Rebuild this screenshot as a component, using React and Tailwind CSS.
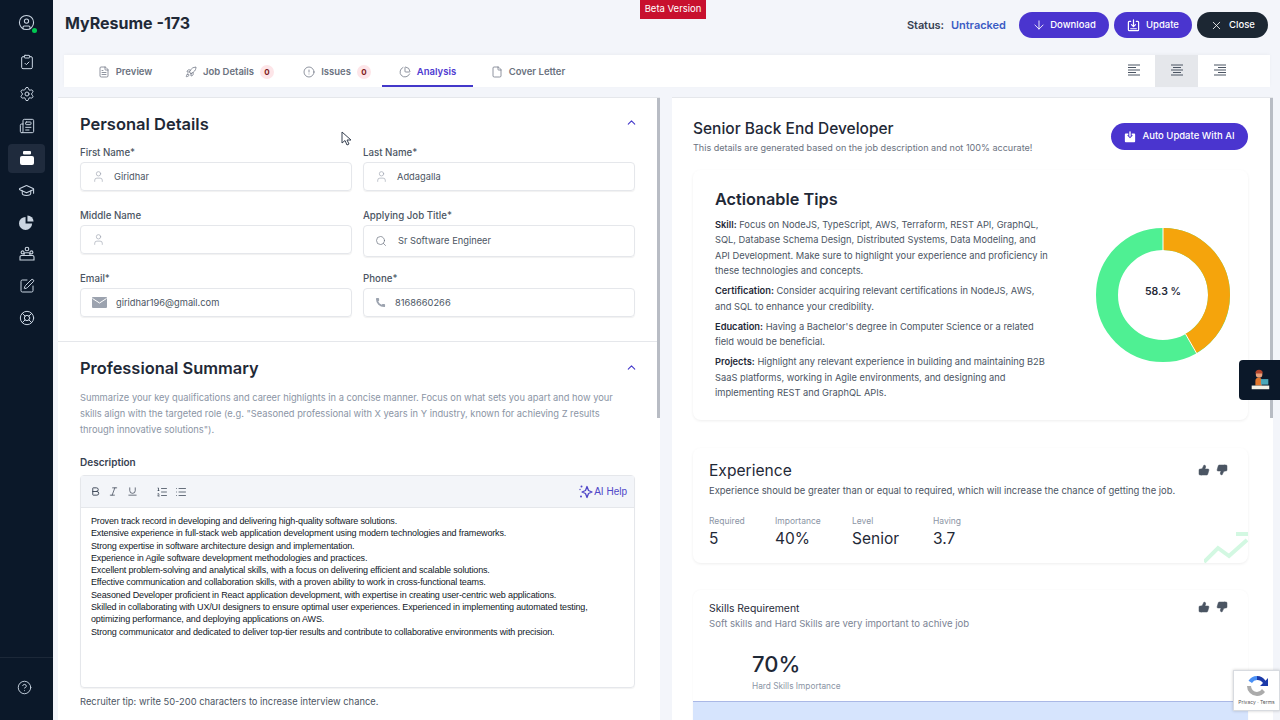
import React from 'react';
import {
  CircleUser, ClipboardCheck, Settings, Newspaper, GraduationCap, SquarePen, LifeBuoy, CircleHelp,
  FileText, Rocket, CircleAlert, ChartPie, File, ArrowDown, X,
  Bold, Italic, Underline, ListOrdered, List, ThumbsUp, ThumbsDown, User, Search,
  Phone, ChevronUp,
} from 'lucide-react';

function StackIcon() {
  return (
    <svg width="16" height="14" viewBox="0 0 16 14" fill="white">
      <rect x="4" y="0" width="8" height="3.5" rx="1" />
      <path d="M3 5h10a2 2 0 0 1 2 2v5a2 2 0 0 1-2 2H3a2 2 0 0 1-2-2V7a2 2 0 0 1 2-2z" />
    </svg>
  );
}

function PieFilled() {
  return (
    <svg width="15" height="15" viewBox="0 0 16 16" fill="#cbd5e1">
      <path d="M7 2a7 7 0 1 0 7 7H7z" />
      <path d="M9 0.5a6.5 6.5 0 0 1 6.5 6.5H9z" />
    </svg>
  );
}

function TeamIcon() {
  return (
    <svg width="16" height="16" viewBox="0 0 16 16" fill="none" stroke="#cbd5e1" strokeWidth="1.1">
      <circle cx="8" cy="3" r="1.8" />
      <circle cx="3.6" cy="6.4" r="1.5" />
      <circle cx="12.4" cy="6.4" r="1.5" />
      <path d="M5 10V8.4a1.6 1.6 0 0 1 1.6-1.6h2.8A1.6 1.6 0 0 1 11 8.4V10" />
      <path d="M1 14v-3a1.5 1.5 0 0 1 1.5-1.5h11A1.5 1.5 0 0 1 15 11v3z" />
    </svg>
  );
}

function Sidebar() {
  const iconCls = 'text-slate-300';
  const items = [
    <ClipboardCheck size={16} strokeWidth={1.5} className={iconCls} />,
    <Settings size={16} strokeWidth={1.5} className={iconCls} />,
    <Newspaper size={16} strokeWidth={1.5} className={iconCls} />,
    <StackIcon />,
    <GraduationCap size={17} strokeWidth={1.5} className={iconCls} />,
    <PieFilled />,
    <TeamIcon />,
    <SquarePen size={16} strokeWidth={1.5} className={iconCls} />,
    <LifeBuoy size={16} strokeWidth={1.5} className={iconCls} />,
  ];
  return (
    <div className="w-[53px] shrink-0 bg-[#0b1829] flex flex-col items-center">
      <div className="relative mt-[14px] mb-[14px] h-[18px]">
        <CircleUser size={17} strokeWidth={1.5} className="text-slate-300" />
        <span className="absolute right-[-2px] bottom-[-1px] w-[5px] h-[5px] rounded-full bg-green-500" />
      </div>
      <div className="flex flex-col items-center w-full">
        {items.map((icon, i) => (
          <div key={i} className="h-[32px] flex items-center">
            <div className={`w-[37px] h-[29px] rounded flex items-center justify-center ${i === 3 ? 'bg-[#1f2b3d]' : ''}`}>{icon}</div>
          </div>
        ))}
      </div>
      <div className="mt-auto w-full border-t border-[#1c2838] h-[63px] flex justify-center pt-[22px] pr-[5px]">
        <CircleHelp size={15} strokeWidth={1.5} className="text-slate-300" />
      </div>
    </div>
  );
}

const tabs = [
  { label: 'Preview', Icon: FileText, w: 'w-[84px]' },
  { label: 'Job Details', Icon: Rocket, badge: true, w: 'w-[125px]' },
  { label: 'Issues', Icon: CircleAlert, badge: true, w: 'w-[90px]' },
  { label: 'Analysis', Icon: ChartPie, active: true, w: 'w-[91px]' },
  { label: 'Cover Letter', Icon: File, w: 'w-[110px]' },
];

function AlignIcon({ side }) {
  const short = side === 'left' ? 'M1 4.500h8M1 9.500h8' : side === 'center' ? 'M3 4.500h8M3 9.500h8' : 'M5 4.500h8M5 9.500h8';
  return (
    <svg width="14" height="14" viewBox="0 0 14 14" fill="none" stroke="#4b5563" strokeWidth="1" className="mb-[2px]">
      <path d="M1 2h12M1 7h12M1 12h12" />
      <path d={short} />
    </svg>
  );
}

function TabBar() {
  return (
    <div className="ml-[11px] mr-[10px] h-[32px] bg-white flex items-center justify-between shadow-[0_-1px_3px_rgba(0,0,0,0.03)]">
      <div className="flex h-full pl-[19px]">
        {tabs.map(({ label, Icon, badge, active, w }) => (
          <div key={label} className={`${w} h-full pt-[2px] flex items-center justify-center gap-[6px] text-[9.5px] font-semibold border-y-2 border-t-transparent ${active ? 'text-[#4f3bd1] border-b-[#4338ca]' : 'text-[#6b7280] border-b-transparent'}`}>
            <Icon size={12} strokeWidth={1.5} className="text-[#6b7280]" />
            <span>{label}</span>
            {badge && <span className="w-[14px] h-[14px] rounded-full bg-[#fde5e8] text-[#7f1d1d] text-[8px] font-bold flex items-center justify-center">0</span>}
          </div>
        ))}
      </div>
      <div className="flex h-full mr-[29px]">
        <div className="w-[43px] flex items-center justify-center"><AlignIcon side="left" /></div>
        <div className="w-[43px] flex items-center justify-center bg-[#e5e7eb]"><AlignIcon side="center" /></div>
        <div className="w-[43px] flex items-center justify-center"><AlignIcon side="right" /></div>
      </div>
    </div>
  );
}

function UpdateIcon() {
  return (
    <svg width="13" height="13" viewBox="0 0 14 14" fill="none" stroke="white" strokeWidth="1.3" strokeLinecap="round" strokeLinejoin="round">
      <path d="M4 2.5H2.5a1 1 0 0 0-1 1v8a1 1 0 0 0 1 1h9a1 1 0 0 0 1-1v-8a1 1 0 0 0-1-1H10" />
      <path d="M7 1v7M4.8 6 7 8.2 9.2 6M4 10.5h6" />
    </svg>
  );
}

function Header() {
  return (
    <div className="h-[55px] shrink-0 flex items-start justify-between pl-[12px] pr-[12px]">
      <h1 className="text-[16px] leading-[46px] font-bold text-[#1f2937]">MyResume -173</h1>
      <div className="flex items-center gap-[5px] mt-[12px] text-[9.5px] font-medium text-white">
        <span className="text-[#374151] text-[11px] tracking-[-0.1px] font-semibold mr-[1px]">Status:</span>
        <span className="text-[#3b5cc4] text-[11px] font-semibold ml-[1px] mr-[8px]">Untracked</span>
        <button className="h-[26px] w-[90px] rounded-full bg-[#4a35cf] flex items-center justify-center gap-[4px]"><ArrowDown size={14} strokeWidth={1.5} />Download</button>
        <button className="h-[26px] w-[78px] rounded-full bg-[#4a35cf] flex items-center justify-center gap-[6px]"><UpdateIcon />Update</button>
        <button className="h-[26px] w-[71px] rounded-full bg-[#1c2733] flex items-center justify-center gap-[6px]"><X size={13} strokeWidth={1.5} />Close</button>
      </div>
    </div>
  );
}

function MailIcon() {
  return (
    <svg width="15" height="11" viewBox="0 0 15 11" className="shrink-0">
      <rect width="15" height="11" rx="1" fill="#9ca3af" />
      <path d="M0.5 1.5 7.5 6l7-4.5" fill="none" stroke="white" strokeWidth="1" />
    </svg>
  );
}

function Field({ label, value, icon, gap = 'ml-[9px]', box = 'h-[29px]' }) {
  return (
    <div>
      <div className="text-[9.7px] leading-[13px] font-medium text-[#4b5563] mb-[3px]">{label}</div>
      <div className={`${box} rounded border border-[#e5e7eb] shadow-[0_1px_1px_rgba(0,0,0,0.06)] flex items-center pl-[11px] text-[9.3px] text-[#4b5563]`}>
        {icon}
        <span className={gap}>{value}</span>
      </div>
    </div>
  );
}

const userIcon = <User size={13} strokeWidth={1.2} className="text-[#9ca3af] shrink-0" />;

const descLines = [
  'Proven track record in developing and delivering high-quality software solutions.',
  'Extensive experience in full-stack web application development using modern technologies and frameworks.',
  'Strong expertise in software architecture design and implementation.',
  'Experience in Agile software development methodologies and practices.',
  'Excellent problem-solving and analytical skills, with a focus on delivering efficient and scalable solutions.',
  'Effective communication and collaboration skills, with a proven ability to work in cross-functional teams.',
  'Seasoned Developer proficient in React application development, with expertise in creating user-centric web applications.',
  'Skilled in collaborating with UX/UI designers to ensure optimal user experiences. Experienced in implementing automated testing,',
  'optimizing performance, and deploying applications on AWS.',
  'Strong communicator and dedicated to deliver top-tier results and contribute to collaborative environments with precision.',
];

function AiStar() {
  return (
    <svg width="14" height="15" viewBox="0 0 14 15" fill="none" stroke="#4f46c8" strokeWidth="1.3" strokeLinejoin="round">
      <path d="M8 2.5 9.5 6.5 13 8l-3.5 1.5L8 13.5 6.5 9.5 3 8l3.500-1.500z" />
      <circle cx="2.500" cy="2.500" r="1" fill="#4f46c8" stroke="none" />
      <circle cx="2" cy="12.500" r="1" fill="#4f46c8" stroke="none" />
      <circle cx="1" cy="5.500" r="0.700" fill="#4f46c8" stroke="none" />
    </svg>
  );
}

function LeftPanel() {
  return (
    <div className="relative w-[602px] shrink-0 bg-white border-t border-[#e5e7eb] overflow-hidden">
      <div className="h-[244px] px-[22px] pt-[14px] border-b border-[#e5e7eb]">
        <div className="flex items-center justify-between">
          <h2 className="text-[16.5px] leading-[24px] font-semibold text-[#1f2937]">Personal Details</h2>
          <ChevronUp size={13} strokeWidth={2} className="text-[#4338ca] mb-[4px]" />
        </div>
        <div className="grid grid-cols-2 gap-x-[11px] gap-y-[18px] w-[555px] mt-[10px]">
          <Field label="First Name*" value="Giridhar" icon={userIcon} />
          <Field label="Last Name*" value="Addagalla" icon={userIcon} />
          <Field label="Middle Name" value="" icon={userIcon} />
          <Field label="Applying Job Title*" value="Sr Software Engineer" gap="ml-[11px]" box="h-[32px] -mb-[3px]" icon={<Search size={12} strokeWidth={1.4} className="text-[#6b7280] shrink-0" />} />
          <Field label="Email*" value="giridhar196@gmail.com" icon={<MailIcon />} />
          <Field label="Phone*" value="8168660266" icon={<Phone size={11} strokeWidth={0} fill="#9ca3af" className="shrink-0" />} />
        </div>
      </div>
      <div className="px-[22px] pt-[14px]">
        <div className="flex items-center justify-between">
          <h2 className="text-[16.4px] leading-[24px] font-semibold text-[#1f2937]">Professional Summary</h2>
          <ChevronUp size={13} strokeWidth={2} className="text-[#4338ca] mb-[2px]" />
        </div>
        <p className="mt-[10px] w-[548px] text-[9.3px] leading-[16px] text-[#8b95a5]">
          Summarize your key qualifications and career highlights in a concise manner. Focus on what sets you apart and how your skills align with the targeted role (e.g. "Seasoned professional with X years in Y industry, known for achieving Z results through innovative solutions").
        </p>
        <div className="mt-[17px] text-[10px] leading-[14px] font-semibold text-[#374151]">Description</div>
        <div className="mt-[6px] w-[555px] h-[213px] rounded border border-[#e5e7eb] shadow-[0_1px_1px_rgba(0,0,0,0.05)]">
          <div className="h-[32px] bg-[#f3f5f9] border-b border-[#e5e7eb] flex items-center pl-[9px] pr-[7px] text-[#374151]">
            <Bold size={11} strokeWidth={2} />
            <Italic size={11} strokeWidth={1.6} className="ml-[7px]" />
            <Underline size={11} strokeWidth={1.6} className="ml-[8px]" />
            <ListOrdered size={12} strokeWidth={1.5} className="ml-[18px]" />
            <List size={12} strokeWidth={1.5} className="ml-[7px]" />
            <div className="ml-auto flex items-center gap-[1px] text-[#4f46c8] text-[10px] font-['Liberation_Sans']">
              <AiStar />AI Help
            </div>
          </div>
          <div className="px-[10px] pt-[7px] text-[#111827] text-[9px] tracking-[-0.15px] leading-[12.3px] font-['Liberation_Sans']">
            {descLines.map((l) => <div key={l} className="whitespace-nowrap">{l}</div>)}
          </div>
        </div>
        <div className="mt-[7px] text-[9.35px] leading-[13px] text-[#4b5563]">Recruiter tip: write 50-200 characters to increase interview chance.</div>
      </div>
      <div className="absolute right-0 top-0 w-[3px] h-[320px] bg-[#b8bcc4]" />
    </div>
  );
}

function Donut() {
  // 41.7% orange from the top going clockwise, rest is green
  return (
    <svg width="136" height="136" viewBox="0 0 136 136" className="shrink-0">
      <circle cx="68" cy="68" r="56" fill="none" stroke="#4ff093" strokeWidth="22" />
      <circle cx="68" cy="68" r="56" fill="none" stroke="#f5a40c" strokeWidth="22" strokeDasharray="146.700 352" transform="rotate(-90 68 68)" />
      <line x1="68" y1="0" x2="68" y2="24" stroke="white" strokeWidth="1" />
      <line x1="90.500" y1="107" x2="102" y2="127" stroke="white" strokeWidth="1" />
    </svg>
  );
}

function Tip({ title, children }) {
  return (
    <p className="mb-[4.6px]">
      <b className="font-semibold text-[#1f2937]">{title}:</b> {children}
    </p>
  );
}

function Thumbs({ className = '' }) {
  return (
    <div className={`flex gap-[6px] text-[#4b5563] ${className}`}>
      <ThumbsUp size={12} fill="#4b5563" strokeWidth={1} />
      <ThumbsDown size={12} fill="#4b5563" strokeWidth={1} />
    </div>
  );
}

function Stat({ label, value, className }) {
  return (
    <div className={className}>
      <div className="text-[8.5px] leading-[12px] text-[#8b95a5]">{label}</div>
      <div className="text-[15.5px] leading-[24px] text-[#1f2937]">{value}</div>
    </div>
  );
}

function RightPanel() {
  return (
    <div className="relative w-[601px] shrink-0 bg-white border-t border-[#e5e7eb] overflow-hidden pl-[21px] pr-[25px]">
      <div className="h-[72px] flex items-start justify-between pt-[20px]">
        <div>
          <h2 className="text-[15.5px] leading-[22px] font-medium text-[#1f2937]">Senior Back End Developer</h2>
          <p className="text-[9.05px] leading-[14px] text-[#6b7280] mt-[1px]">This details are generated based on the job description and not 100% accurate!</p>
        </div>
        <button className="h-[27px] w-[137px] mt-[5px] rounded-full bg-[#4a35cf] text-white text-[9.5px] font-medium flex items-center justify-center gap-[6px]">
          <svg width="12" height="12" viewBox="0 0 14 14" fill="white"><path d="M2 3h3v2H3.500L7 8.500 10.500 5H9V3h3a1 1 0 0 1 1 1v8a1 1 0 0 1-1 1H2a1 1 0 0 1-1-1V4a1 1 0 0 1 1-1z" /><rect x="6.200" y="0.500" width="1.600" height="6" /></svg>
          Auto Update With AI
        </button>
      </div>
      <div className="h-[250px] rounded-lg shadow-[0_1px_3px_rgba(0,0,0,0.07)] flex pl-[22px] pt-[17px]">
        <div className="w-[338px]">
          <h3 className="text-[16.3px] leading-[24px] font-semibold text-[#1f2937] mb-[6px]">Actionable Tips</h3>
          <div className="text-[9.3px] leading-[15.45px] text-[#4b5563]">
            <Tip title="Skill">Focus on NodeJS, TypeScript, AWS, Terraform, REST API, GraphQL, SQL, Database Schema Design, Distributed Systems, Data Modeling, and API Development. Make sure to highlight your experience and proficiency in these technologies and concepts.</Tip>
            <Tip title="Certification">Consider acquiring relevant certifications in NodeJS, AWS, and SQL to enhance your credibility.</Tip>
            <Tip title="Education">Having a Bachelor's degree in Computer Science or a related field would be beneficial.</Tip>
            <Tip title="Projects">Highlight any relevant experience in building and maintaining B2B SaaS platforms, working in Agile environments, and designing and implementing REST and GraphQL APIs.</Tip>
          </div>
        </div>
        <div className="relative ml-[42px] mt-[40px] w-[136px] h-[136px]">
          <Donut />
          <span className="absolute inset-0 flex items-center justify-center text-[10.5px] font-semibold text-[#1f2937] pb-[7px]">58.3 %</span>
        </div>
      </div>
      <div className="relative h-[115px] mt-[28px] rounded-lg shadow-[0_1px_3px_rgba(0,0,0,0.07)] overflow-hidden px-[16px] pt-[13px]">
        <div className="flex items-start justify-between pr-[4px]">
          <h3 className="text-[15.6px] leading-[20px] text-[#1f2937]">Experience</h3>
          <Thumbs className="mt-[3px]" />
        </div>
        <p className="text-[9.43px] leading-[14px] text-[#4b5563] mt-[3px]">Experience should be greater than or equal to required, which will increase the chance of getting the job.</p>
        <div className="flex mt-[17px]">
          <Stat label="Required" value="5" className="w-[66px]" />
          <Stat label="Importance" value="40%" className="w-[77px]" />
          <Stat label="Level" value="Senior" className="w-[81px]" />
          <Stat label="Having" value="3.7" />
        </div>
        <svg width="44" height="32" viewBox="0 0 44 32" fill="none" stroke="#d3f8e2" strokeWidth="4" className="absolute right-0 bottom-0">
          <path d="M0 31 14 17 25 25 43 9" />
          <path d="M32 3h12" />
        </svg>
      </div>
      <div className="relative mt-[27px] rounded-lg h-[140px] shadow-[0_0_2px_rgba(0,0,0,0.05)] px-[16px] pt-[11px]">
        <div className="flex items-start justify-between pr-[4px]">
          <h3 className="text-[10.4px] leading-[14px] mt-[1px] text-[#1f2937]">Skills Requirement</h3>
          <Thumbs />
        </div>
        <p className="text-[9.6px] leading-[14px] text-[#7b8494] mt-[1px]">Soft skills and Hard Skills are very important to achive job</p>
        <div className="pl-[43px] mt-[18px]">
          <div className="text-[22px] leading-[30px] font-medium text-[#1f2937]">70%</div>
          <div className="text-[8.3px] leading-[12px] text-[#8b95a5] mt-[1px]">Hard Skills Importance</div>
        </div>
      </div>
      <div className="h-[40px] -mt-[29px] relative bg-[#d6e4fd] border-t border-[#aab8e6]" />
      <div className="absolute right-0 top-0 w-[3px] h-[320px] bg-[#b8bcc4]" />
    </div>
  );
}

export default function App() {
  return (
    <div className="relative flex w-[1280px] h-[720px] overflow-hidden bg-[#f3f5fa] font-['Inter',sans-serif]">
      <Sidebar />
      <div className="flex-1 flex flex-col min-w-0">
        <Header />
        <TabBar />
        <div className="flex flex-1 min-h-0 mt-[10px] ml-[5px] gap-[12px]">
          <LeftPanel />
          <RightPanel />
        </div>
      </div>
      <div className="absolute left-[640px] top-0 w-[66px] h-[19px] bg-[#c8102e] text-white text-[9.5px] flex items-center justify-center">Beta Version</div>
      <svg width="11" height="15" viewBox="0 0 11 15" className="absolute left-[341px] top-[131px]" fill="white" stroke="#374151" strokeWidth="1">
        <path d="M1 1v11l3-2.500 2 4.500 2-1-2-4h4z" />
      </svg>
      <div className="absolute left-[1239px] top-[360px] w-[41px] h-[40px] bg-[#0b1829] rounded-l flex items-center justify-center">
        <svg width="24" height="26" viewBox="0 0 26 26">
          <circle cx="12" cy="7" r="3.500" fill="#e9a27d" />
          <path d="M8 6a4 4 0 0 1 8 0z" fill="#b4452c" />
          <path d="M8 19v-5a3.500 3.500 0 0 1 7 0v5z" fill="#e2762c" />
          <rect x="14" y="12" width="8" height="6" fill="#4aa7b8" />
          <rect x="4" y="19" width="19" height="4" fill="#f3f1e6" />
        </svg>
      </div>
      <div className="absolute left-[1233px] top-[670px] w-[47px] h-[41px] bg-white border border-[#d8dbe0] shadow-[0_0_3px_rgba(0,0,0,0.2)] flex flex-col items-center pt-[3px]">
        <svg width="24" height="24" viewBox="0 0 24 24" fill="none">
          <path d="M12 2a10 10 0 0 1 8.500 4.700L23 4v8h-8l3-3a7 7 0 0 0-6-3z" fill="#1c3aa9" />
          <path d="M12 2a10 10 0 0 0-8.500 4.700L7 9a6 6 0 0 1 5-3z" fill="#4a90f5" />
          <path d="M2 12a10 10 0 0 0 10 10 10 10 0 0 0 8-4l-3-3a6 6 0 0 1-5 3 6 6 0 0 1-6-6H2z" fill="#ababab" />
        </svg>
        <span className="text-[5px] leading-[8px] text-[#555]">Privacy · Terms</span>
      </div>
    </div>
  );
}
